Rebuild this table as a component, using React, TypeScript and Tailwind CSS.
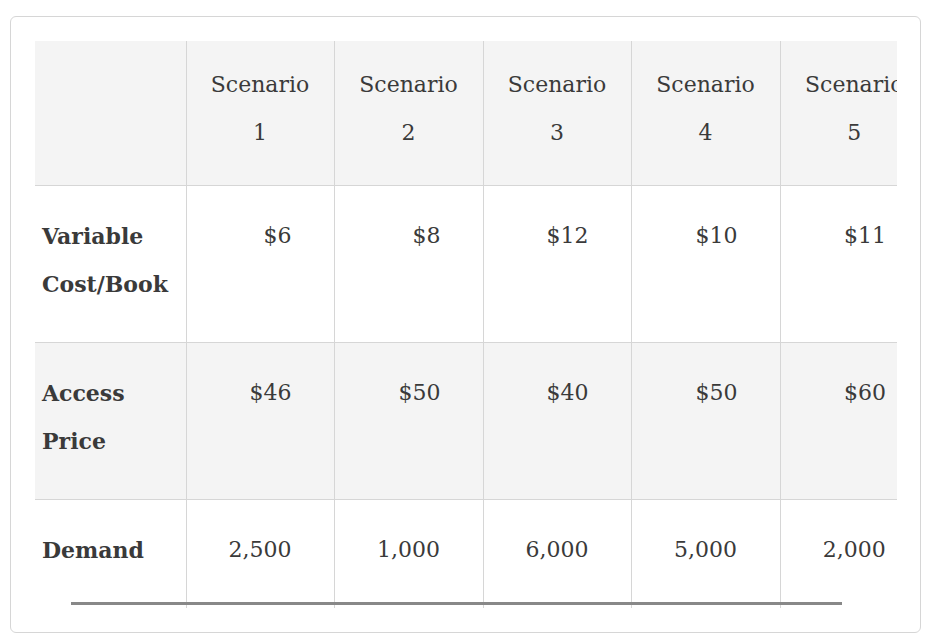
import React from "react";

const scenarios = ["1", "2", "3", "4", "5"];

const rows = [
  {
    label: ["Variable", "Cost/Book"],
    values: ["$6", "$8", "$12", "$10", "$11"],
    align: "right",
    shade: false,
  },
  {
    label: ["Access", "Price"],
    values: ["$46", "$50", "$40", "$50", "$60"],
    align: "right",
    shade: true,
  },
  {
    label: ["Demand"],
    values: ["2,500", "1,000", "6,000", "5,000", "2,000"],
    align: "center",
    shade: false,
  },
];

const colWidths = ["w-[151px]", "w-[148px]", "w-[149px]", "w-[148px]", "w-[149px]", "w-[148px]"];

export default function App() {
  return (
    <div className="min-h-[639px] bg-white pl-[10px] pr-[11px] pt-[16px] pb-[6px] font-['DejaVu_Serif',serif] text-[#3a3a3a]">
      <div className="rounded-[6px] border border-[#d6d6d6] pl-[24px] pr-[23px] py-[24px]">
        <div className="relative overflow-hidden">
          <table className="w-[893px] table-fixed border-collapse text-[22px] leading-[48px]">
            <colgroup>
              {colWidths.map((w, i) => (
                <col key={i} className={w} />
              ))}
            </colgroup>
            <thead>
              <tr className="bg-[#f4f4f4]">
                <th className="border-b border-[#d6d6d6] px-[8px]" />
                {scenarios.map((n) => (
                  <th
                    key={n}
                    className="border-b border-l border-[#d6d6d6] px-[8px] pt-[20px] pb-[28px] text-center align-top font-normal"
                  >
                    Scenario
                    <br />
                    {n}
                  </th>
                ))}
              </tr>
            </thead>
            <tbody>
              {rows.map((row, ri) => {
                const last = ri === rows.length - 1;
                const edge = last ? "pb-[34px]" : "border-b pb-[34px]";
                return (
                  <tr key={ri} className={row.shade ? "bg-[#f4f4f4]" : "bg-white"}>
                    <td className={`${edge} border-[#d6d6d6] px-[7px] pt-[26px] align-top font-bold`}>
                      {row.label.map((l, li) => (
                        <div key={li}>{l}</div>
                      ))}
                    </td>
                    {row.values.map((v, vi) => (
                      <td
                        key={vi}
                        className={
                          row.align === "right"
                            ? `${edge} border-l border-[#d6d6d6] pl-[8px] pr-[42px] pt-[26px] text-right align-top`
                            : `${edge} border-l border-[#d6d6d6] px-[8px] pt-[26px] text-center align-top`
                        }
                      >
                        {v}
                      </td>
                    ))}
                  </tr>
                );
              })}
            </tbody>
          </table>
          <div className="absolute bottom-[3px] left-[36px] h-[3px] w-[771px] bg-[#888888]" />
        </div>
      </div>
    </div>
  );
}
